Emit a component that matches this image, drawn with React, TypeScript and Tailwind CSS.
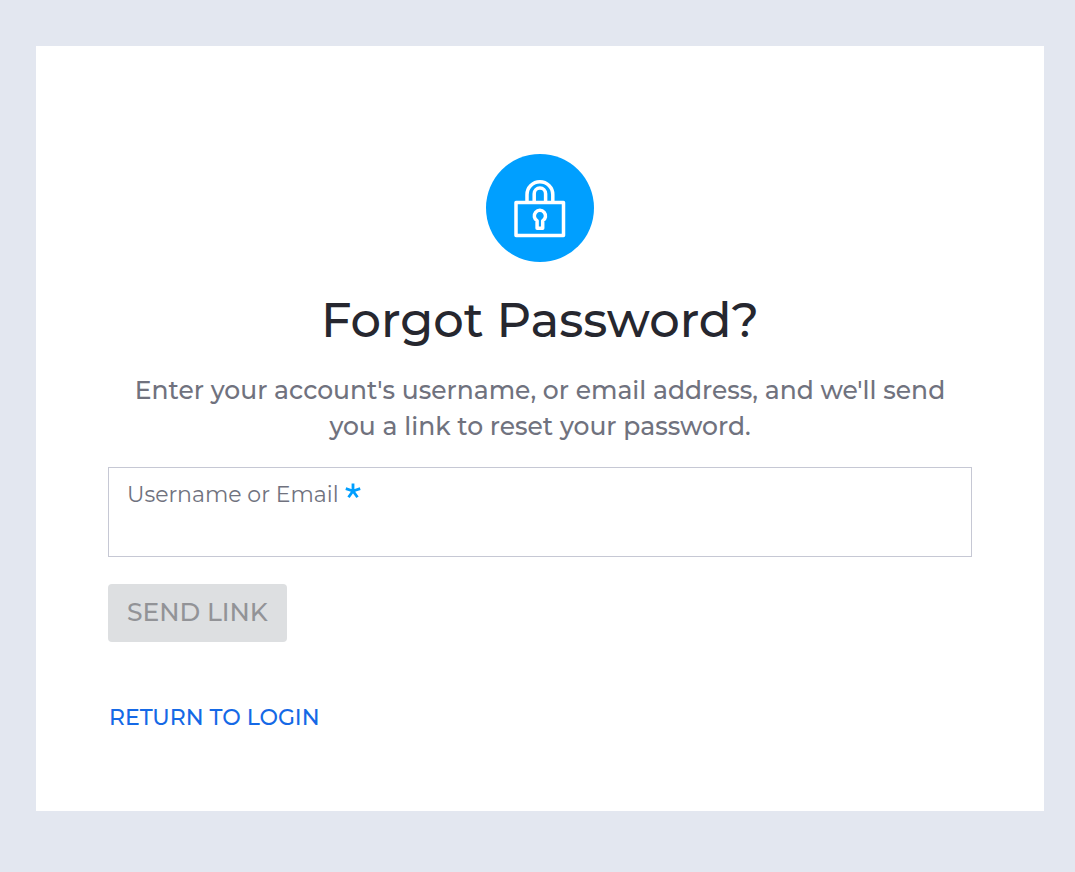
import React from "react";

function LockBadge() {
  return (
    <svg
      viewBox="0 0 108 108"
      className="size-[108px]"
      fill="none"
      stroke="#ffffff"
      strokeWidth="3.5"
      aria-hidden="true"
    >
      <circle cx="54" cy="54" r="54" fill="#009fff" stroke="none" />
      <rect x="30" y="48.5" width="47.5" height="33" strokeLinejoin="round" />
      <path d="M41 48.5V40.7a12.9 12.9 0 0 1 25.8 0V48.5" />
      <path d="M48.2 48.5V39.8a5.7 5.7 0 0 1 11.4 0V48.5" />
      <path d="M51.1 74.2V66.8a5.6 5.6 0 1 1 5.6 0V74.2Z" strokeLinejoin="round" />
    </svg>
  );
}

function RequiredMark() {
  return (
    <svg
      viewBox="0 0 16 16"
      className="size-4"
      fill="none"
      stroke="#009fff"
      strokeWidth="2.8"
      aria-hidden="true"
    >
      <path d="M8 8V0.5M8 8L15.2 5.7M8 8L12.5 14.2M8 8L3.5 14.2M8 8L0.8 5.7" />
    </svg>
  );
}

export default function App() {
  return (
    <div className="min-h-screen bg-[#e3e7f0] pt-[46px] pr-[31px] pb-[61px] pl-9 font-[Montserrat,Inter,sans-serif]">
      <main className="bg-white px-[72px] pt-[108px] pb-[77px]">
        <div className="flex flex-col items-center text-center">
          <LockBadge />
          <h1 className="mt-7 text-[48px] leading-[60px] font-medium text-[#26272f]">
            Forgot Password?
          </h1>
          <p className="mt-[22px] px-5 text-[25px] leading-9 font-medium text-[#70727e]">
            Enter your account's username, or email address, and we'll send you a link to reset your
            password.
          </p>
        </div>
        <form className="flex flex-col items-start" onSubmit={(e) => e.preventDefault()}>
          <div className="mt-[23px] flex h-[90px] w-full flex-col border border-[#c6c8d4] px-[18px] pt-3">
            <label
              htmlFor="account"
              className="flex gap-1.5 text-[22px] leading-[30px] text-[#70727e]"
            >
              Username or Email
              <span className="pt-[3px]">
                <RequiredMark />
              </span>
            </label>
            <input
              id="account"
              type="text"
              required
              className="w-full min-w-0 flex-1 text-[22px] text-[#26272f] outline-none"
            />
          </div>
          <button
            type="submit"
            disabled
            className="mt-[27px] h-[58px] rounded bg-[#dddfe1] px-[19px] text-[25px] font-medium text-[#929397]"
          >
            SEND LINK
          </button>
        </form>
        <a
          href="#login"
          className="mt-[60px] ml-px inline-block text-[22px] leading-8 font-medium text-[#1569e6]"
        >
          RETURN TO LOGIN
        </a>
      </main>
    </div>
  );
}
